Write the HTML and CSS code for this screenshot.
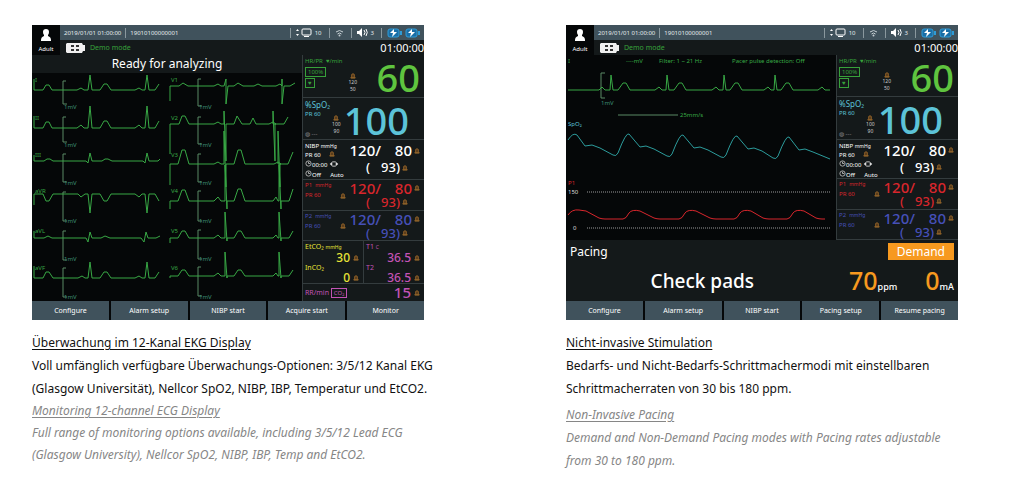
FILE: index.html
```
<!DOCTYPE html>
<html lang="de">
<head>
    <meta charset="UTF-8">
    <meta name="viewport" content="width=device-width, initial-scale=1.0">
    <title>EKG Display und Stimulation</title>
    <link rel="stylesheet" href="styles.css">
</head>
<body>
    <!-- shared icons -->
    <svg class="sprite" aria-hidden="true">
        <symbol id="bell" viewBox="0 0 8 8"><path d="M2 5V3q0-2 2-2t2 2v2l1 1H1zM1 7h6" fill="#5a3d1c" stroke="currentColor"/></symbol>
        <symbol id="person" viewBox="0 0 10 12"><path d="M5 0a3 3 0 0 1 3 3q0 2-1 3v1q3 1 3 4v1H0v-1q0-3 3-4V6Q2 5 2 3a3 3 0 0 1 3-3z" fill="#fff"/></symbol>
        <symbol id="module" viewBox="0 0 19 10"><path d="M1 0h15l1 2h2v6h-2l-1 2H1L0 9V1z" fill="#f0f0f0"/><path d="M5 2h3v2H5zM10 2h3v2h-3zM5 6h3v2H5zM10 6h3v2h-3z" fill="#333"/></symbol>
        <symbol id="display" viewBox="0 0 16 9"><path d="M0 3l1.500-2L3 3zM0 6l1.500 2L3 6z" fill="#fff"/><rect x="6" y="1" width="9" height="6" rx="1" fill="none" stroke="#fff"/><path d="M8 8.500h5" stroke="#fff"/></symbol>
        <symbol id="wifi" viewBox="0 0 9 8"><path d="M1 3q3.500-3 7 0M2.500 5q2-2 4 0" fill="none" stroke="#c4ced2"/><circle cx="4.500" cy="6.500" r="1" fill="#c4ced2"/></symbol>
        <symbol id="speaker" viewBox="0 0 11 9"><path d="M0 3h2l3-3v9L2 6H0z" fill="#fff"/><path d="M7 2q2 2.500 0 5M9 1q2.500 3.500 0 7" fill="none" stroke="#fff"/></symbol>
        <symbol id="battery" viewBox="0 0 15 10"><rect x="1" y="1" width="11" height="8" rx="2" fill="#1a6ea6" stroke="#2e9bd6"/><path d="M13 3h2v4h-2z" fill="#2e9bd6"/><path d="M7 1L3 5h3L5 9l5-5H7z" fill="#fff"/></symbol>
        <symbol id="cuff" viewBox="0 0 10 7"><path d="M0 3.500L3 1v5zM10 3.500L7 1v5z" fill="#ddd"/><path d="M3 1h4M3 6h4" stroke="#ddd"/></symbol>
        <symbol id="clock" viewBox="0 0 8 8"><circle cx="4" cy="4" r="3" fill="none" stroke="#bbb"/><path d="M4 2v2h2" fill="none" stroke="#bbb"/></symbol>
    </svg>

    <main class="features">
        <article class="feature">
            <div class="monitor">
                <header class="monitor-head">
                    <div class="patient">
                        <svg class="icon-person"><use href="#person"/></svg>
                        <span>Adult</span>
                    </div>
                    <div class="status">
                        <span>2019/01/01 01:00:00</span>
                        <span class="cell">19010100000001</span>
                        <span class="cell push"><svg class="icon-display"><use href="#display"/></svg>10</span>
                        <span class="cell"><svg class="icon-wifi"><use href="#wifi"/></svg></span>
                        <span class="cell"><svg class="icon-speaker"><use href="#speaker"/></svg>3</span>
                        <span class="cell"><svg class="icon-battery"><use href="#battery"/></svg><svg class="icon-battery"><use href="#battery"/></svg></span>
                    </div>
                    <div class="mode">
                        <svg class="icon-module"><use href="#module"/></svg>
                        <span class="demo">Demo mode</span>
                        <time class="clock">01:00:00</time>
                    </div>
                </header>

                <div class="monitor-body">
                    <div class="traces">
                        <div class="banner">Ready for analyzing</div>
                        <svg class="waves" viewBox="0 0 270 228">
                            <!-- calibration marks -->
                            <g class="calibration">
                                <path d="M34 8h-3v23h4M34 44h-3v25h4M34 81h-3v28h4M34 119h-3v29h4M34 158h-3v29h4M34 195h-3v29h4"/>
                                <path d="M169 6h-3v27h4M169 44h-3v27h4M169 81h-3v28h4M169 118h-3v30h4M169 157h-3v29h4M169 194h-3v29h4"/>
                            </g>
                            <!-- limb leads -->
                            <g class="ecg">
                                <path d="M2 6v11h9l3-5h3l3 5h25l4-2 3 2h4l2-15 2 15h8l4-6h3l4 6h24l4-2 3 2h3l2-15 2 15h6l4-6"/>
                                <path d="M2 43v12h9l3-6h3l3 6h25l4-3 3 3h4l2-22 2 22h8l4-7h3l4 7h24l4-3 3 3h3l2-22 2 22h6l4-7"/>
                                <path d="M2 82v6h10l3-2h3l3 2h33l2 2 2-10 2 8h10l3-2h3l4 2h31l2 2 2-10 2 8h9l2-2"/>
                                <path d="M2 132v-11h9l3 7h3l4-7h25l3 3 4-3h3l2 19 2-19h8l4 7h3l4-7h24l4 3 3-3h3l2 19 2-19h6l4 7"/>
                                <path d="M2 158v7h10l4-2 4 2h34l2 4 2-10 2 6h9l4-2 5 2h31l3 4 2-10 2 6h8l4-2"/>
                                <path d="M2 193v12h9l3-6h3l4 6h25l4-2 3 2h3l2-16 2 16h8l4-6h3l4 6h24l4-2 3 2h3l2-16 2 16h6l4-6"/>
                            </g>
                            <!-- chest leads -->
                            <g class="ecg">
                                <path d="M138 28V13h9l4-3 5 3h26l4-2 3 2h3l2-7v25l2-18h6l4-3 5 3h11l4-2 4 2h14l4-2 2 2V6v25l2-18h6l5-3"/>
                                <path d="M138 81V51h9l3-8h3l4 8h25l4-2 3 2h3V38l2 50V51h8l3-8 5 8h8l3-6 3 6h13l4-2 3 2h-3V38l2 50V51h9l4-7"/>
                                <path d="M138 112V91h8l4-14h3l4 14h25l4-2 3 2h3V58l2 56V91h8l4-14h3l4 14h29l4-2 3 2h-3V58l2 56V91h8l5-12"/>
                                <path d="M138 136v-8h8l4-11h3l4 11h25l4-4 3 4h4V92l2 44v-8h7l4-12h3l4 12h28l3-4 2 4h1V92l2 44v-8h8l4-12"/>
                                <path d="M138 170v-5h8l4-7h3l4 7h25l4-3 3 3h4v-26l2 29v-3h7l4-7h3l4 7h28l3-3 2 3h1v-26l2 29v-3h8l4-7"/>
                                <path d="M138 205v-2h8l4-6h3l4 6h25l4-3 3 3h4v-24l2 26v-2h7l4-6h3l4 6h28l3-3 2 3h1v-24l2 26v-2h8l4-6"/>
                            </g>
                            <g class="lead">
                                <text x="3" y="9">I</text><text x="3" y="47">II</text><text x="3" y="84">III</text>
                                <text x="3" y="120">aVR</text><text x="3" y="160">aVL</text><text x="3" y="197">aVF</text>
                                <text x="139" y="9">V1</text><text x="139" y="47">V2</text><text x="139" y="84">V3</text>
                                <text x="139" y="120">V4</text><text x="139" y="160">V5</text><text x="139" y="197">V6</text>
                            </g>
                            <g class="scale">
                                <text x="32" y="36">1mV</text><text x="32" y="74">1mV</text><text x="32" y="112">1mV</text>
                                <text x="32" y="150">1mV</text><text x="32" y="188">1mV</text><text x="32" y="226">1mV</text>
                                <text x="167" y="36">1mV</text><text x="167" y="74">1mV</text><text x="167" y="112">1mV</text>
                                <text x="167" y="150">1mV</text><text x="167" y="188">1mV</text><text x="167" y="226">1mV</text>
                            </g>
                        </svg>
                    </div>

                    <div class="vitals">
                        <section class="vital tall green">
                            <div class="labels"><span>HR/PR &nbsp;♥/min</span><span class="tag">100%</span><span class="tag">♥</span></div>
                            <div class="limits"><svg class="icon-bell"><use href="#bell"/></svg><span>120</span><span>50</span></div>
                            <div class="big">60</div>
                        </section>
                        <section class="vital tall cyan">
                            <div class="labels"><span class="name">%SpO₂</span><span>PR 60</span><span class="last">◍ ---</span></div>
                            <div class="limits"><svg class="icon-bell"><use href="#bell"/></svg><span>100</span><span>90</span></div>
                            <div class="big shift">100</div>
                        </section>
                        <section class="vital white">
                            <div class="labels"><span>NIBP <small>mmHg</small></span><span>PR 60 &nbsp; &nbsp; <svg class="icon-bell"><use href="#bell"/></svg></span><span><svg class="icon-clock"><use href="#clock"/></svg>00:00 <svg class="icon-cuff"><use href="#cuff"/></svg></span><span><svg class="icon-clock"><use href="#clock"/></svg>Off &nbsp; &nbsp; &nbsp;Auto</span></div>
                            <div class="pressure"><span>120/<b>80</b><svg class="icon-bell"><use href="#bell"/></svg></span><span>(<b>93)</b><svg class="icon-bell"><use href="#bell"/></svg></span></div>
                        </section>
                        <section class="vital short red">
                            <div class="labels"><span>P1 &nbsp;<small>mmHg</small></span><span>PR 60</span></div>
                            <svg class="icon-bell"><use href="#bell"/></svg>
                            <div class="pressure"><span>120/<b>80</b><svg class="icon-bell"><use href="#bell"/></svg></span><span>(<b>93)</b><svg class="icon-bell"><use href="#bell"/></svg></span></div>
                        </section>
                        <section class="vital short blue">
                            <div class="labels"><span>P2 &nbsp;<small>mmHg</small></span><span>PR 60</span></div>
                            <svg class="icon-bell"><use href="#bell"/></svg>
                            <div class="pressure"><span>120/<b>80</b><svg class="icon-bell"><use href="#bell"/></svg></span><span>(<b>93)</b><svg class="icon-bell"><use href="#bell"/></svg></span></div>
                        </section>
                        <div class="pair">
                            <section class="gas yellow">
                                <span>EtCO₂ <small>mmHg</small></span>
                                <span class="reading">30<svg class="icon-bell"><use href="#bell"/></svg></span>
                                <span>InCO₂</span>
                                <span class="reading">0<svg class="icon-bell"><use href="#bell"/></svg></span>
                            </section>
                            <section class="gas pink">
                                <span>T1 <small>C</small></span>
                                <span class="reading">36.5<svg class="icon-bell"><use href="#bell"/></svg></span>
                                <span>T2</span>
                                <span class="reading">36.5<svg class="icon-bell"><use href="#bell"/></svg></span>
                            </section>
                        </div>
                        <section class="vital resp pink">
                            <span>RR/min <span class="tag">CO₂</span></span>
                            <span class="reading">15<svg class="icon-bell"><use href="#bell"/></svg></span>
                        </section>
                    </div>
                </div>

                <nav class="softkeys">
                    <button type="button">Configure</button>
                    <button type="button">Alarm setup</button>
                    <button type="button">NIBP start</button>
                    <button type="button">Acquire start</button>
                    <button type="button">Monitor</button>
                </nav>
            </div>

            <div class="text-de">
                <h2>Überwachung im 12-Kanal EKG Display</h2>
                <p>Voll umfänglich verfügbare Überwachungs-Optionen: 3/5/12 Kanal EKG<br>(Glasgow Universität), Nellcor SpO2, NIBP, IBP, Temperatur und EtCO2.</p>
            </div>
            <div class="text-en" lang="en">
                <h3>Monitoring 12-channel ECG Display</h3>
                <p>Full range of monitoring options available, including 3/5/12 Lead ECG<br>(Glasgow University), Nellcor SpO2, NIBP, IBP, Temp and EtCO2.</p>
            </div>
        </article>

        <article class="feature">
            <div class="monitor">
                <header class="monitor-head">
                    <div class="patient">
                        <svg class="icon-person"><use href="#person"/></svg>
                        <span>Adult</span>
                    </div>
                    <div class="status">
                        <span>2019/01/01 01:00:00</span>
                        <span class="cell">19010100000001</span>
                        <span class="cell push"><svg class="icon-display"><use href="#display"/></svg>10</span>
                        <span class="cell"><svg class="icon-wifi"><use href="#wifi"/></svg></span>
                        <span class="cell"><svg class="icon-speaker"><use href="#speaker"/></svg>3</span>
                        <span class="cell"><svg class="icon-battery"><use href="#battery"/></svg><svg class="icon-battery"><use href="#battery"/></svg></span>
                    </div>
                    <div class="mode">
                        <svg class="icon-module"><use href="#module"/></svg>
                        <span class="demo">Demo mode</span>
                        <time class="clock">01:00:00</time>
                    </div>
                </header>

                <div class="monitor-body">
                    <div class="traces">
                        <svg class="waves" viewBox="0 0 270 185">
                            <g class="lead">
                                <text x="2" y="8">I</text>
                                <text x="60" y="8">----mV</text>
                                <text x="93" y="8">Filter: 1 ~ 21 Hz</text>
                                <text x="166" y="8">Pacer pulse detection: Off</text>
                                <text x="114" y="62">25mm/s</text>
                            </g>
                            <g class="scale"><text x="35" y="50">1mV</text></g>
                            <path class="calibration" d="M39 18h-4v25h4M52 60h60"/>
                            <path class="ecg" d="M2 35h31l3-3 3 3h5l1-15 2 15h5l5-7h3l4 7h25l4-3 3 3h4l1-15 2 15h5l5-7h3l4 7h26l4-3 3 3h4l1-15 2 15h4l5-7h3l4 7h22l4-3 3 3h3l1-15 2 15h4l5-7h3l4 7h25l4-3 3 3h5"/>
                            <text class="spo2-label" x="2" y="71">SpO₂</text>
                            <path class="spo2" d="M2 85q5-8 9-5l8 11 7-1 8 3 13 7q3 2 5-2 8-21 11-19l11 13 6-1 8 3 13 7q3 2 5-2 8-21 11-19l11 13 6-1 8 3 13 7q3 2 5-2 8-21 11-19l11 13 6-1 8 3 11 7q3 2 5-2 8-21 11-19l10 13 6-1 8 3 17 7"/>
                            <path class="grid-line" d="M21 137h244M21 173h244"/>
                            <path class="ibp" d="M2 160q4-6 11-5l7 1 13 7q3 1 6 1h18q3 0 6-6 3-4 11-2l14 7q3 1 6 1h19q3 0 6-6 3-4 11-2l14 7q3 1 6 1h18q3 0 6-6 3-4 11-2l12 7q3 1 6 1h18q3 0 6-6 3-4 11-2l12 7q3 1 6 1h3"/>
                            <text class="ibp-label" x="2" y="130">P1</text>
                            <g class="axis"><text x="2" y="139">150</text><text x="7" y="175">0</text></g>
                        </svg>
                    </div>

                    <div class="vitals">
                        <section class="vital tall green">
                            <div class="labels"><span>HR/PR &nbsp;♥/min</span><span class="tag">100%</span><span class="tag">♥</span></div>
                            <div class="limits"><svg class="icon-bell"><use href="#bell"/></svg><span>120</span><span>50</span></div>
                            <div class="big">60</div>
                        </section>
                        <section class="vital tall cyan">
                            <div class="labels"><span class="name">%SpO₂</span><span>PR 60</span><span class="last">◍ ---</span></div>
                            <div class="limits"><svg class="icon-bell"><use href="#bell"/></svg><span>100</span><span>90</span></div>
                            <div class="big shift">100</div>
                        </section>
                        <section class="vital white">
                            <div class="labels"><span>NIBP <small>mmHg</small></span><span>PR 60 &nbsp; &nbsp; <svg class="icon-bell"><use href="#bell"/></svg></span><span><svg class="icon-clock"><use href="#clock"/></svg>00:00 <svg class="icon-cuff"><use href="#cuff"/></svg></span><span><svg class="icon-clock"><use href="#clock"/></svg>Off &nbsp; &nbsp; &nbsp;Auto</span></div>
                            <div class="pressure"><span>120/<b>80</b><svg class="icon-bell"><use href="#bell"/></svg></span><span>(<b>93)</b><svg class="icon-bell"><use href="#bell"/></svg></span></div>
                        </section>
                        <section class="vital short red">
                            <div class="labels"><span>P1 &nbsp;<small>mmHg</small></span><span>PR 60</span></div>
                            <svg class="icon-bell"><use href="#bell"/></svg>
                            <div class="pressure"><span>120/<b>80</b><svg class="icon-bell"><use href="#bell"/></svg></span><span>(<b>93)</b><svg class="icon-bell"><use href="#bell"/></svg></span></div>
                        </section>
                        <section class="vital short blue">
                            <div class="labels"><span>P2 &nbsp;<small>mmHg</small></span><span>PR 60</span></div>
                            <svg class="icon-bell"><use href="#bell"/></svg>
                            <div class="pressure"><span>120/<b>80</b><svg class="icon-bell"><use href="#bell"/></svg></span><span>(<b>93)</b><svg class="icon-bell"><use href="#bell"/></svg></span></div>
                        </section>
                    </div>
                </div>

                <section class="pacing">
                    <div class="pacing-head">
                        <span>Pacing</span>
                        <span class="demand">Demand</span>
                    </div>
                    <div class="pacing-values">
                        <strong class="alert">Check pads</strong>
                        <span class="rate">70<small>ppm</small></span>
                        <span class="rate">0<small>mA</small></span>
                    </div>
                </section>

                <nav class="softkeys">
                    <button type="button">Configure</button>
                    <button type="button">Alarm setup</button>
                    <button type="button">NIBP start</button>
                    <button type="button">Pacing setup</button>
                    <button type="button">Resume pacing</button>
                </nav>
            </div>

            <div class="text-de">
                <h2>Nicht-invasive Stimulation</h2>
                <p>Bedarfs- und Nicht-Bedarfs-Schrittmachermodi mit einstellbaren<br>Schrittmacherraten von 30 bis 180 ppm.</p>
            </div>
            <div class="text-en loose" lang="en">
                <h3>Non-Invasive Pacing</h3>
                <p>Demand and Non-Demand Pacing modes with Pacing rates adjustable<br>from 30 to 180 ppm.</p>
            </div>
        </article>
    </main>
</body>
</html>
```
FILE: styles.css
```
:root {
    --green: #5fc43f;
    --trace: #38a845;
    --cyan: #5cc3d8;
    --red: #d8262c;
    --blue: #4650b8;
    --yellow: #e8e337;
    --pink: #c353b5;
    --orange: #f7991f;
    --bar: #40525c;
    --panel: #14191a;
    --line: #343c3e;
}

* {
    margin: 0;
    padding: 0;
    box-sizing: border-box;
}

body {
    background: #fff;
    color: #111;
    font-family: 'Noto Sans', sans-serif;
}

.sprite {
    display: none;
}

.features {
    display: grid;
    grid-template-columns: minmax(0, 1fr) minmax(0, 1fr);
    gap: 134px;
    padding: 25px 58px 16px 32px;
}

/* monitor frame */
.monitor {
    width: 98%;
    background: #050708;
    color: #fff;
    overflow: hidden;
    white-space: nowrap;
}

.monitor-head {
    display: grid;
    grid-template-columns: 28px 1fr;
    grid-template-rows: 15px 15px;
    font-size: 6px;
}

.patient {
    grid-row: span 2;
    display: flex;
    flex-direction: column;
    align-items: center;
    justify-content: space-between;
    padding: 4px 0 1px;
    line-height: 10px;
    font-size: 6px;
}

.status {
    display: flex;
    align-items: center;
    gap: 4px;
    padding: 0 4px;
    background: var(--bar);
    color: #e4eaec;
}

.cell {
    display: flex;
    align-items: center;
    gap: 3px;
    height: 10px;
    padding-left: 4px;
    border-left: 1px solid #8a989e;
}

.cell + .cell {
    padding-right: 3px;
    padding-left: 5px;
}

.cell:last-child {
    padding-right: 0;
}

.push {
    margin-left: auto;
}

.mode {
    display: flex;
    align-items: center;
    gap: 5px;
    padding-left: 6px;
    background: var(--panel);
}

.demo {
    color: #37a13a;
    font-size: 7px;
}

.clock {
    margin-left: auto;
    font-size: 11px;
    line-height: 15px;
}

.icon-person { width: 10px; height: 12px; }
.icon-module { width: 19px; height: 10px; }
.icon-display { width: 16px; height: 9px; }
.icon-wifi { width: 9px; height: 8px; }
.icon-speaker { width: 11px; height: 9px; }
.icon-battery { width: 15px; height: 10px; }
.icon-cuff { width: 10px; height: 6px; }
.icon-clock { width: 7px; height: 7px; }
.icon-bell { width: 6px; height: 6px; color: #a06c2c; flex: none; }

.monitor-body {
    display: grid;
    grid-template-columns: minmax(0, 270fr) minmax(0, 122fr);
}

.banner {
    background: var(--panel);
    font-size: 12px;
    line-height: 18px;
    text-align: center;
}

/* traces */
.waves {
    display: block;
    width: 100%;
    font-size: 6px;
}

.waves path {
    fill: none;
}

.ecg {
    stroke: var(--trace);
}

.calibration {
    stroke: #5b8a64;
}

.lead {
    fill: var(--trace);
}

.scale {
    fill: #3c9175;
}

.spo2 {
    stroke: #2c9c9c;
}

.spo2-label {
    fill: var(--cyan);
}

.ibp {
    stroke: var(--red);
}

.ibp-label {
    fill: var(--red);
}

.axis {
    fill: #ddd;
}

.grid-line {
    stroke: #9a9a9a;
    stroke-dasharray: 1 1;
}

/* vitals column */
.vitals {
    display: flex;
    flex-direction: column;
    background: var(--panel);
    border-left: 1px solid var(--line);
}

.vital {
    display: flex;
    flex: 40 0 0;
    justify-content: space-between;
    padding: 2px 4px 0 2px;
    border-bottom: 1px solid var(--line);
    font-size: 7px;
    line-height: 9px;
    min-height: 0;
}

.tall {
    flex-grow: 43;
}

.short {
    flex-grow: 31;
    padding-top: 1px;
}

.labels {
    display: flex;
    flex-direction: column;
    width: 32px;
    gap: 1px;
    font-size: 6px;
}

.tall .labels {
    width: 24px;
}

.labels .tag {
    align-self: flex-start;
}

.labels .last {
    margin-top: auto;
    color: #8a8a8a;
}

.name {
    font-size: 8px;
}

small {
    font-size: 5px;
}

.tag {
    padding: 0 2px;
    border: 1px solid currentColor;
    font-size: 6px;
    line-height: 8px;
}

.limits {
    display: flex;
    flex-direction: column;
    align-items: center;
    justify-content: flex-end;
    width: 12px;
    padding-bottom: 4px;
    color: #ccc;
    font-size: 5px;
    line-height: 7px;
}

.big {
    font-size: 38px;
    font-weight: 500;
    line-height: 40px;
}

.shift {
    padding-right: 11px;
}

.green .labels { color: #37a13a; }
.green .big { color: var(--green); }
.cyan { color: var(--cyan); }
.red { color: var(--red); }
.blue { color: var(--blue); }
.yellow { color: var(--yellow); }
.pink { color: var(--pink); }

.white .labels {
    gap: 0;
}

.short .icon-bell {
    align-self: center;
}

.pressure {
    display: flex;
    flex-direction: column;
    align-items: flex-end;
    font-size: 15px;
    font-weight: 500;
    line-height: 17px;
}

.pressure span {
    display: flex;
    align-items: center;
    gap: 2px;
}

.pressure b {
    min-width: 29px;
    font-weight: 500;
    text-align: right;
}

.pressure span:last-child {
    margin-right: 12px;
    font-size: 13px;
}

.pressure span:last-child b {
    min-width: 28px;
}

.short .pressure {
    line-height: 14px;
}

.pair {
    display: flex;
    flex: 42 0 0;
    border-bottom: 1px solid var(--line);
}

.gas {
    display: flex;
    flex: 1;
    flex-direction: column;
    padding: 1px 4px 0 2px;
    font-size: 7px;
    line-height: 9px;
}

.gas + .gas {
    border-left: 1px solid var(--line);
}

.reading {
    display: flex;
    align-items: center;
    justify-content: flex-end;
    gap: 3px;
    font-size: 12px;
    font-weight: 500;
    line-height: 11px;
}

.resp {
    flex-grow: 18;
    align-items: center;
    padding-top: 0;
    border-bottom: 0;
}

.resp .reading {
    font-size: 15px;
}

/* pacing panel */
.pacing {
    padding: 3px 4px 0;
    background: var(--panel);
}

.pacing-head {
    display: flex;
    justify-content: space-between;
    font-size: 12px;
    line-height: 17px;
}

.demand {
    padding: 0 9px;
    background: var(--orange);
}

.pacing-values {
    display: grid;
    grid-template-columns: minmax(0, 266fr) minmax(0, 63fr) minmax(0, 57fr);
    align-items: center;
    line-height: 40px;
    text-align: right;
}

.alert {
    font-size: 19px;
    font-weight: 500;
    text-align: center;
}

.rate {
    color: var(--orange);
    font-size: 25px;
    font-weight: 500;
    line-height: 41px;
}

.rate small {
    color: #fff;
    font-size: 9px;
    line-height: 9px;
}

/* soft keys */
.softkeys {
    display: grid;
    grid-template-columns: repeat(5, 1fr);
    gap: 2px;
}

.softkeys button {
    height: 19px;
    border: 0;
    background: var(--bar);
    color: #fff;
    font-family: inherit;
    font-size: 7px;
}

/* descriptions */
.text-de {
    margin-top: 11px;
    font-size: 12px;
    line-height: 23px;
    white-space: nowrap;
}

.text-en {
    color: #868686;
    font-size: 12px;
    font-style: italic;
    line-height: 22px;
    white-space: nowrap;
}

.loose {
    margin-top: 3px;
    line-height: 23px;
}

h2,
h3 {
    font-size: inherit;
    font-weight: 400;
    text-decoration: underline;
    text-underline-offset: 2px;
}
```
